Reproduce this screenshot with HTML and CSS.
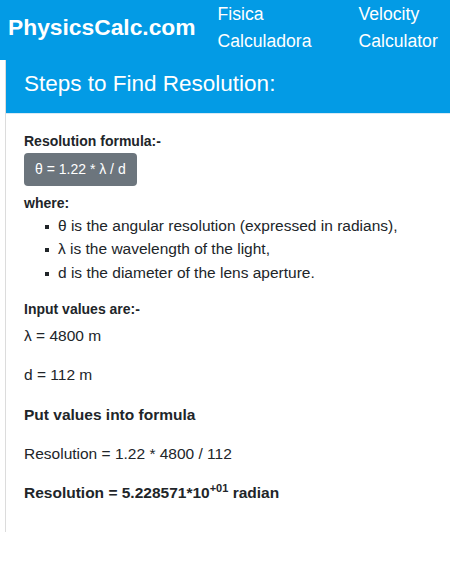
FILE: index.html
```html
<!DOCTYPE html>
<html lang="en">
<head>
<meta charset="utf-8">
<title>Resolution - PhysicsCalc.com</title>
<link rel="stylesheet" href="styles.css">
</head>
<body>
<header class="topbar">
  <div class="logo">PhysicsCalc.com</div>
  <nav class="nav">
    <a class="nav-item nav-first" href="#">Fisica<br>Calculadora</a>
    <a class="nav-item" href="#">Velocity<br>Calculator</a>
  </nav>
</header>
<section class="card">
  <div class="card-header">Steps to Find Resolution:</div>
  <div class="card-body">
    <div class="label">Resolution formula:-</div>
    <div class="formula">θ = 1.22 * λ / d</div>
    <div class="label label-where">where:</div>
    <ul class="list">
      <li>θ is the angular resolution (expressed in radians),</li>
      <li>λ is the wavelength of the light,</li>
      <li>d is the diameter of the lens aperture.</li>
    </ul>
    <div class="label label-input">Input values are:-</div>
    <p class="val val-first">λ = 4800 m</p>
    <p class="val">d = 112 m</p>
    <p class="val strong">Put values into formula</p>
    <p class="val">Resolution = 1.22 * 4800 / 112</p>
    <p class="val strong result">Resolution = 5.228571*10<sup>+01</sup> radian</p>
  </div>
</section>
</body>
</html>
```
FILE: styles.css
```css
html, body {
  margin: 0;
  padding: 0;
  background: #ffffff;
}
body {
  font-family: "Liberation Sans", Arial, sans-serif;
  color: #212529;
  width: 450px;
  overflow: hidden;
}
.topbar {
  display: flex;
  align-items: flex-start;
  height: 60px;
  background: #039be5;
  color: #ffffff;
}
.logo {
  padding-left: 8px;
  font-size: 22.8px;
  font-weight: bold;
  line-height: 54px;
  white-space: nowrap;
}
.nav {
  display: flex;
  margin-left: 22px;
  padding-top: 1px;
}
.nav-item {
  display: block;
  color: #ffffff;
  text-decoration: none;
  font-size: 17.6px;
  line-height: 26.5px;
  white-space: nowrap;
}
.nav-first {
  width: 141px;
}
.card {
  margin-left: 5px;
  border-left: 1px solid #dcdcdc;
  padding-bottom: 28px;
}
.card-header {
  background: #039be5;
  color: #ffffff;
  font-size: 22.5px;
  line-height: 26px;
  padding: 11px 0 16px 18px;
  border-bottom: 1px solid #d7e9f4;
}
.card-body {
  padding: 17px 18px 0 18px;
}
.label {
  font-size: 14px;
  font-weight: bold;
  line-height: 21px;
}
.formula {
  display: inline-block;
  margin-top: 1px;
  background: #6c757d;
  color: #ffffff;
  font-size: 14px;
  line-height: 21px;
  padding: 6px 11px;
  border-radius: 4px;
}
.label-where {
  margin-top: 7px;
}
.list {
  list-style: none;
  margin: 0;
  padding: 0;
  font-size: 15.5px;
  line-height: 23.3px;
}
.list li::before {
  content: "";
  display: inline-block;
  width: 4px;
  height: 4px;
  background: #212529;
  vertical-align: 2px;
  margin-left: 21px;
  margin-right: 9px;
}
.label-input {
  margin-top: 15.5px;
}
.val {
  margin: 16.2px 0 0 0;
  font-size: 15.5px;
  line-height: 23.3px;
}
.val-first {
  margin-top: 3.5px;
}
.strong {
  font-weight: bold;
}
.result {
  margin-top: 15px;
}
.result sup {
  font-size: 11px;
  line-height: 0;
  vertical-align: 6px;
}
```
